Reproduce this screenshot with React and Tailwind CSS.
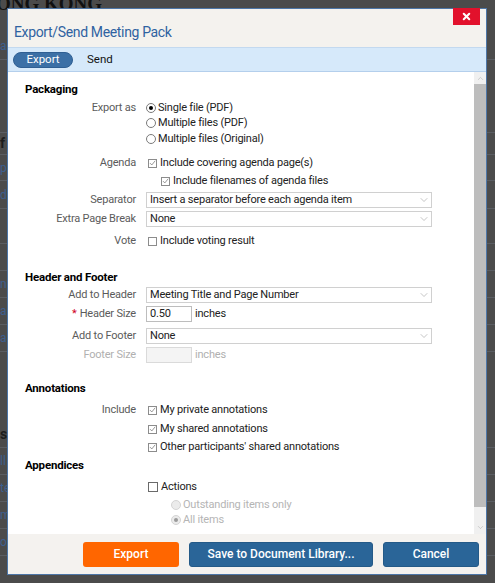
import { ChevronDown, ChevronUp, X } from "lucide-react";

/* ---------------- SMALL CONTROLS ---------------- */

const Checkbox = ({ checked, big }) => (
  <span
    className={
      big
        ? "w-[10px] h-[10px] border border-[#6a6a6a] bg-white flex items-center justify-center shrink-0"
        : "w-[9px] h-[9px] border border-[#8c8c8c] bg-white flex items-center justify-center shrink-0"
    }
  >
    {checked && (
      <svg viewBox="0 0 9 9" className="w-[8px] h-[8px]">
        <path d="M1.2 4.6 L3.6 7 L8 1.6" fill="none" stroke="#6b6b6b" strokeWidth="0.9" />
      </svg>
    )}
  </span>
);

const Radio = ({ checked, disabled }) => (
  <span
    className={
      disabled
        ? "w-[10px] h-[10px] rounded-full border border-[#d4d4d4] bg-[#ebebeb] flex items-center justify-center shrink-0"
        : "w-[10px] h-[10px] rounded-full border border-[#7a7a7a] bg-white flex items-center justify-center shrink-0"
    }
  >
    {checked && (
      <span
        className={
          disabled
            ? "w-[4px] h-[4px] rounded-full bg-[#9a9a9a]"
            : "w-[4px] h-[4px] rounded-full bg-black"
        }
      />
    )}
  </span>
);

const Select = ({ value }) => (
  <div className="w-[286px] h-[16px] border border-[#d0d0d0] bg-white flex items-center justify-between pl-[3px] pr-[1px] text-[#222]">
    <span>{value}</span>
    <ChevronDown size={12} strokeWidth={1} color="#8a8a8a" />
  </div>
);

/* one form line: label column + control column */
const Row = ({ label, className = "", children, muted, required }) => (
  <div className={"grid grid-cols-[128px_1fr] gap-x-[10px] items-center h-[15px] " + className}>
    <div className={muted ? "text-right text-[#b0b0b0]" : "text-right text-[#5b5b5b]"}>
      {required && <span className="text-[#d0021b] mr-[3px]">*</span>}
      {label}
    </div>
    <div className="flex items-center">{children}</div>
  </div>
);

const Heading = ({ children, className = "" }) => (
  <div className={"h-[15px] flex items-center pl-[17px] font-bold text-black text-[11.5px] tracking-[-0.2px] " + className}>
    {children}
  </div>
);

const CheckOpt = ({ checked, big, children, indent }) => (
  <span className={indent ? "flex items-center gap-[3px] ml-[15px]" : "flex items-center gap-[3px] ml-[2px]"}>
    <Checkbox checked={checked} big={big} />
    <span className="text-[#222]">{children}</span>
  </span>
);

const RadioOpt = ({ checked, disabled, children, indent }) => (
  <span className={indent ? "flex items-center gap-[2px] ml-[25px]" : "flex items-center gap-[2px]"}>
    <Radio checked={checked} disabled={disabled} />
    <span className={disabled ? "text-[#b5b5b5]" : "text-[#222]"}>{children}</span>
  </span>
);

/* ---------------- BACKDROP PAGE ---------------- */

const backRows = [
  { h: "h-[60px]", t: "ar", c: "text-[#3d5f8f] pt-[32px]" },
  { h: "h-[73px]", t: "", c: "" },
  { h: "h-[22px]", t: "f", c: "text-[#1c1c1c] font-bold text-[14px]" },
  { h: "h-[26px]", t: "p", c: "text-[#3d5f8f]" },
  { h: "h-[28px]", t: "d", c: "text-[#3d5f8f]" },
  { h: "h-[35px]", t: "", c: "" },
  { h: "h-[27px]", t: "", c: "" },
  { h: "h-[27px]", t: "n", c: "text-[#3d5f8f]" },
  { h: "h-[27px]", t: "a", c: "text-[#3d5f8f]" },
  { h: "h-[27px]", t: "a", c: "text-[#3d5f8f]" },
  { h: "h-[96px]", t: "s", c: "text-[#1c1c1c] font-bold text-[14px] pt-[70px]" },
  { h: "h-[27px]", t: "ll", c: "text-[#3d5f8f]" },
  { h: "h-[27px]", t: "te", c: "text-[#3d5f8f]" },
  { h: "h-[27px]", t: "m", c: "text-[#3d5f8f]" },
  { h: "h-[27px]", t: "o", c: "text-[#3d5f8f]" },
];

const Backdrop = () => (
  <div className="flex flex-col">
    <div className="h-0 overflow-visible">
      <div className="-mt-[6px] -ml-[4px] font-['Liberation_Serif',serif] font-bold text-[19px] text-[#111] leading-[20px]">
        ONG KONG
      </div>
    </div>
    {backRows.map((r, i) => (
      <div
        key={i}
        className={"border-b border-[#5a5d62] flex items-center text-[12px] " + r.h + " " + r.c}
      >
        {r.t}
      </div>
    ))}
  </div>
);

/* ---------------- DIALOG ---------------- */

const ExportDialog = () => (
  <div className="absolute left-[7px] top-[8px] w-[480px] h-[567px] border border-[#4d76a7] bg-white flex flex-col">
    {/* TITLE */}
    <div className="relative h-[38px] shrink-0 bg-[#f4f2ee] pl-[6px] pt-[14px]">
      <div className="text-[14px] leading-[18px] tracking-[-0.35px] text-[#2f62a1]">Export/Send Meeting Pack</div>
      <button className="absolute -top-[1px] right-[6px] w-[27px] h-[17px] bg-[#e2112c] flex items-center justify-center">
        <X size={11} strokeWidth={4.5} color="#fff" />
      </button>
    </div>

    {/* TABS */}
    <div className="h-[25px] shrink-0 bg-[#d6e9fa] border-t border-[#c3d9ef] border-b border-b-[#b4cfec] flex items-center pl-[5px]">
      <div className="w-[60px] h-[16px] rounded-full bg-[#3c70a6] border border-[#2f5f93] text-white text-[11.5px] flex items-center justify-center">
        Export
      </div>
      <div className="ml-[14px] text-[11.5px] text-[#111]">Send</div>
    </div>

    {/* BODY */}
    <div className="flex-1 flex min-h-0">
      <div className="flex-1 flex flex-col pt-[10px] text-[11px] tracking-[-0.2px] overflow-hidden">
        <Heading>Packaging</Heading>
        <Row label="Export as" className="mt-[3px]">
          <RadioOpt checked>Single file (PDF)</RadioOpt>
        </Row>
        <Row label="">
          <RadioOpt>Multiple files (PDF)</RadioOpt>
        </Row>
        <Row label="" className="mt-[1px]">
          <RadioOpt>Multiple files (Original)</RadioOpt>
        </Row>
        <Row label="Agenda" className="mt-[9px]">
          <CheckOpt checked>Include covering agenda page(s)</CheckOpt>
        </Row>
        <Row label="" className="mt-[3px]">
          <CheckOpt checked indent>Include filenames of agenda files</CheckOpt>
        </Row>
        <Row label="Separator" className="mt-[4px] h-[16px]">
          <Select value="Insert a separator before each agenda item" />
        </Row>
        <Row label="Extra Page Break" className="mt-[3px] h-[16px]">
          <Select value="None" />
        </Row>
        <Row label="Vote" className="mt-[6px]">
          <CheckOpt>Include voting result</CheckOpt>
        </Row>

        <Heading className="mt-[22px]">Header and Footer</Heading>
        <Row label="Add to Header" className="mt-[2px] h-[16px]">
          <Select value="Meeting Title and Page Number" />
        </Row>
        <Row label="Header Size" required className="mt-[3px] h-[16px]">
          <div className="w-[46px] h-[16px] border border-[#bdbdbd] bg-white pl-[3px] flex items-center text-[#222]">
            0.50
          </div>
          <span className="ml-[3px] text-[#222]">inches</span>
        </Row>
        <Row label="Add to Footer" className="mt-[6px] h-[16px]">
          <Select value="None" />
        </Row>
        <Row label="Footer Size" muted className="mt-[3px] h-[16px]">
          <div className="w-[46px] h-[16px] border border-[#dadada] bg-[#f4f4f4]" />
          <span className="ml-[3px] text-[#b0b0b0]">inches</span>
        </Row>

        <Heading className="mt-[18px]">Annotations</Heading>
        <Row label="Include" className="mt-[6px]">
          <CheckOpt checked>My private annotations</CheckOpt>
        </Row>
        <Row label="" className="mt-[4px]">
          <CheckOpt checked>My shared annotations</CheckOpt>
        </Row>
        <Row label="" className="mt-[3px]">
          <CheckOpt checked>Other participants' shared annotations</CheckOpt>
        </Row>

        <Heading className="mt-[4px]">Appendices</Heading>
        <Row label="" className="mt-[6px]">
          <CheckOpt big>Actions</CheckOpt>
        </Row>
        <Row label="" className="mt-[3px]">
          <RadioOpt disabled indent>Outstanding items only</RadioOpt>
        </Row>
        <Row label="">
          <RadioOpt disabled checked indent>All items</RadioOpt>
        </Row>
      </div>

      {/* SCROLLBAR */}
      <div className="w-[12px] shrink-0 bg-[#f0f0f0] flex flex-col items-center">
        <div className="h-[12px] flex items-center justify-center">
          <ChevronUp size={9} strokeWidth={1.2} color="#a0a0a0" />
        </div>
        <div className="w-full h-[423px] bg-[#bdbdbd]" />
        <div className="flex-1" />
        <div className="h-[14px] flex items-center justify-center">
          <ChevronDown size={9} strokeWidth={1.2} color="#a0a0a0" />
        </div>
      </div>
    </div>

    {/* FOOTER */}
    <div className="h-[40px] shrink-0 bg-[#f4f2ef] flex items-center justify-end gap-[10px] pr-[7px] text-[12px] font-medium text-white">
      <button className="w-[96px] h-[25px] rounded-[3px] bg-[#ff6600]">Export</button>
      <button className="w-[184px] h-[25px] rounded-[3px] bg-[#2a6598] border border-[#245a88]">
        Save to Document Library...
      </button>
      <button className="w-[96px] h-[25px] rounded-[3px] bg-[#2a6598] border border-[#245a88]">Cancel</button>
    </div>
  </div>
);

export default function App() {
  return (
    <div className="relative w-[495px] h-[583px] overflow-hidden bg-[#4b4b4b] font-['Roboto','Noto_Sans',sans-serif]">
      <Backdrop />
      <ExportDialog />
    </div>
  );
}
